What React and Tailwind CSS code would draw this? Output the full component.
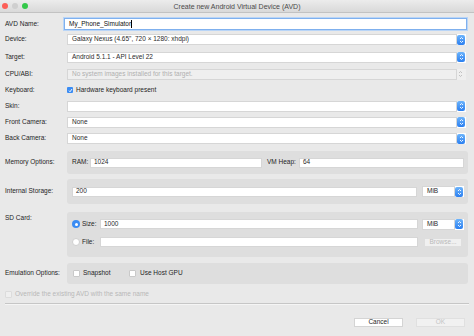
import React from 'react';

function Stepper({ disabled }) {
  if (disabled) {
    return (
      <span className="flex w-[7px] h-[9px] items-center justify-center mr-[1px]">
        <svg width="5" height="8" viewBox="0 0 5 8" fill="none" stroke="#b5b5b5" strokeWidth="0.8">
          <path d="M1 3 L2.5 1.5 L4 3" />
          <path d="M1 5 L2.5 6.5 L4 5" />
        </svg>
      </span>
    );
  }
  return (
    <span className="flex w-[8px] h-[10px] items-center justify-center rounded-[2px] bg-gradient-to-b from-[#6db4fb] to-[#2a7ff0] shrink-0">
      <svg width="5" height="8" viewBox="0 0 5 8" fill="none" stroke="#ffffff" strokeWidth="0.9">
        <path d="M1 3 L2.5 1.5 L4 3" />
        <path d="M1 5 L2.5 6.5 L4 5" />
      </svg>
    </span>
  );
}

function Select({ value, disabled, className = '' }) {
  return (
    <div className={`flex items-center h-[11px] ${className}`}>
      <div
        className={`flex-1 h-full flex items-center pl-[4px] border border-[#d6d6d6] ${
          disabled ? 'bg-[#efefef] text-[#b0b0b0]' : 'bg-white text-[#2a2a2a]'
        }`}
      >
        {value}
      </div>
      <div className={`h-full flex items-center ${disabled ? 'bg-[#efefef]' : 'bg-white'} pr-[1px]`}>
        <Stepper disabled={disabled} />
      </div>
    </div>
  );
}

function Input({ value, className = '' }) {
  return (
    <div className={`h-[10px] bg-white border border-[#d6d6d6] flex items-center pl-[3px] text-[#2a2a2a] ${className}`}>
      {value}
    </div>
  );
}

function Row({ label, h, children }) {
  return (
    <div className={`flex items-center ${h}`}>
      <div className="w-[67px] pl-[5px] shrink-0 text-[#1e1e1e]">{label}</div>
      <div className="flex-1 flex items-center">{children}</div>
    </div>
  );
}

function Check({ checked, disabled }) {
  if (checked) {
    return (
      <span className="w-[6px] h-[6px] rounded-[1px] bg-[#3b8cf3] flex items-center justify-center shrink-0">
        <svg width="5" height="5" viewBox="0 0 5 5" fill="none" stroke="#fff" strokeWidth="0.9">
          <path d="M1 2.6 L2 3.8 L4 1" />
        </svg>
      </span>
    );
  }
  return (
    <span
      className={`w-[7px] h-[7px] rounded-[1px] border shrink-0 ${
        disabled ? 'border-[#dcdcdc] bg-[#efefef]' : 'border-[#c9c9c9] bg-white'
      }`}
    />
  );
}

function Radio({ checked }) {
  if (checked) {
    return (
      <span className="w-[8px] h-[8px] rounded-full bg-[#3b8cf3] flex items-center justify-center shrink-0">
        <span className="w-[3px] h-[3px] rounded-full bg-white" />
      </span>
    );
  }
  return <span className="w-[8px] h-[8px] rounded-full bg-white border border-[#cfcfcf] shrink-0" />;
}

export default function App() {
  return (
    <div
      className="w-[474px] h-[336px] bg-[#e9e9e9] text-[6.5px] leading-none flex flex-col overflow-hidden"
      style={{ fontFamily: '"Liberation Sans", Arial, sans-serif' }}
    >
      {/* title bar */}
      <div className="h-[13px] shrink-0 relative flex items-center justify-center bg-gradient-to-b from-[#ececec] to-[#d9d9d9] border-b border-[#c2c2c2]">
        <div className="absolute left-[2px] top-[3px] flex gap-[4px]">
          <span className="block w-[6px] h-[6px] rounded-full bg-[#fc5f57]" />
          <span className="block w-[6px] h-[6px] rounded-full bg-[#cfcfcf]" />
          <span className="block w-[6px] h-[6px] rounded-full bg-[#34c84a]" />
        </div>
        <span className="text-[7px] text-[#4a4a4a]">Create new Android Virtual Device (AVD)</span>
      </div>

      <div className="flex flex-col pr-[8px]">
        <Row label="AVD Name:" h="h-[14px] mt-[4px]">
          <div className="flex-1 h-[12px] -ml-[3px] mr-[-1px] bg-white border border-[#7fb0ee] shadow-[0_0_0_1px_#b9d5f7] flex items-center pl-[4px] text-[#111]">
            My_Phone_Simulator<span className="w-[0.5px] h-[8px] bg-black" />
          </div>
        </Row>
        <Row label="Device:" h="h-[17px]">
          <Select className="flex-1" value={'Galaxy Nexus (4.65", 720 × 1280: xhdpi)'} />
        </Row>
        <Row label="Target:" h="h-[18px]">
          <Select className="flex-1" value="Android 5.1.1 - API Level 22" />
        </Row>
        <Row label="CPU/ABI:" h="h-[16px]">
          <Select className="flex-1" disabled value="No system images installed for this target." />
        </Row>
        <Row label="Keyboard:" h="h-[16px]">
          <div className="flex items-center gap-[3px] text-[#1e1e1e]">
            <Check checked />
            Hardware keyboard present
          </div>
        </Row>
        <Row label="Skin:" h="h-[16px]">
          <Select className="flex-1" value="" />
        </Row>
        <Row label="Front Camera:" h="h-[16px]">
          <Select className="flex-1" value="None" />
        </Row>
        <Row label="Back Camera:" h="h-[17px]">
          <Select className="flex-1" value="None" />
        </Row>

        <Row label="Memory Options:" h="h-[23px] mt-[4px]">
          <div className="flex-1 h-[23px] -mr-[2px] bg-[#dedede] rounded-[3px] flex items-center pl-[5px] pr-[4px] text-[#1e1e1e]">
            <span className="w-[18px]">RAM:</span>
            <Input className="w-[172px]" value="1024" />
            <span className="ml-[5px] w-[32px]">VM Heap:</span>
            <Input className="flex-1" value="64" />
          </div>
        </Row>

        <Row label="Internal Storage:" h="h-[25px] mt-[5px]">
          <div className="flex-1 h-[25px] -mr-[2px] bg-[#dedede] rounded-[3px] flex items-center pl-[5px] pr-[4px]">
            <Input className="flex-1" value="200" />
            <Select className="w-[42px] ml-[5px]" value="MiB" />
          </div>
        </Row>

        <div className="flex mt-[8px]">
          <div className="w-[67px] pl-[5px] pt-[3px] shrink-0 text-[#1e1e1e]">SD Card:</div>
          <div className="flex-1 h-[45px] -mr-[2px] bg-[#dedede] rounded-[3px] flex flex-col pl-[5px] pr-[4px] pt-[7px] gap-[8px] text-[#1e1e1e]">
            <div className="flex items-center h-[10px]">
              <Radio checked />
              <span className="ml-[2px] w-[18px]">Size:</span>
              <Input className="flex-1" value="1000" />
              <Select className="w-[42px] ml-[4px]" value="MiB" />
            </div>
            <div className="flex items-center h-[10px]">
              <Radio />
              <span className="ml-[2px] w-[18px]">File:</span>
              <Input className="flex-1" value="" />
              <div className="ml-[6px] mr-[2px] w-[38px] h-[9px] bg-[#f0f0f0] border border-[#dedede] text-[#b9b9b9] flex items-center justify-center">
                Browse...
              </div>
            </div>
          </div>
        </div>

        <Row label="Emulation Options:" h="h-[21px] mt-[6px]">
          <div className="flex-1 h-[21px] -mr-[2px] bg-[#dedede] rounded-[3px] flex items-center pl-[6px] text-[#1e1e1e]">
            <Check />
            <span className="ml-[3px] w-[46px]">Snapshot</span>
            <Check />
            <span className="ml-[4px]">Use Host GPU</span>
          </div>
        </Row>

        <div className="flex items-center h-[13px] mt-[4px] pl-[5px] gap-[3px] text-[#b8b8b8]">
          <Check disabled />
          Override the existing AVD with the same name
        </div>
      </div>

      <div className="mx-[5px] mt-[2px] border-t border-[#c6c6c6] shadow-[0_1px_0_#f5f5f5]" />

      <div className="flex justify-end gap-[13px] pr-[9px] mt-[14px]">
        <div className="w-[49px] h-[9px] bg-white border border-[#d4d4d4] flex items-center justify-center text-[#1e1e1e]">
          Cancel
        </div>
        <div className="w-[49px] h-[9px] bg-[#f1f1f1] border border-[#e0e0e0] flex items-center justify-center text-[#c4c4c4]">
          OK
        </div>
      </div>
    </div>
  );
}
